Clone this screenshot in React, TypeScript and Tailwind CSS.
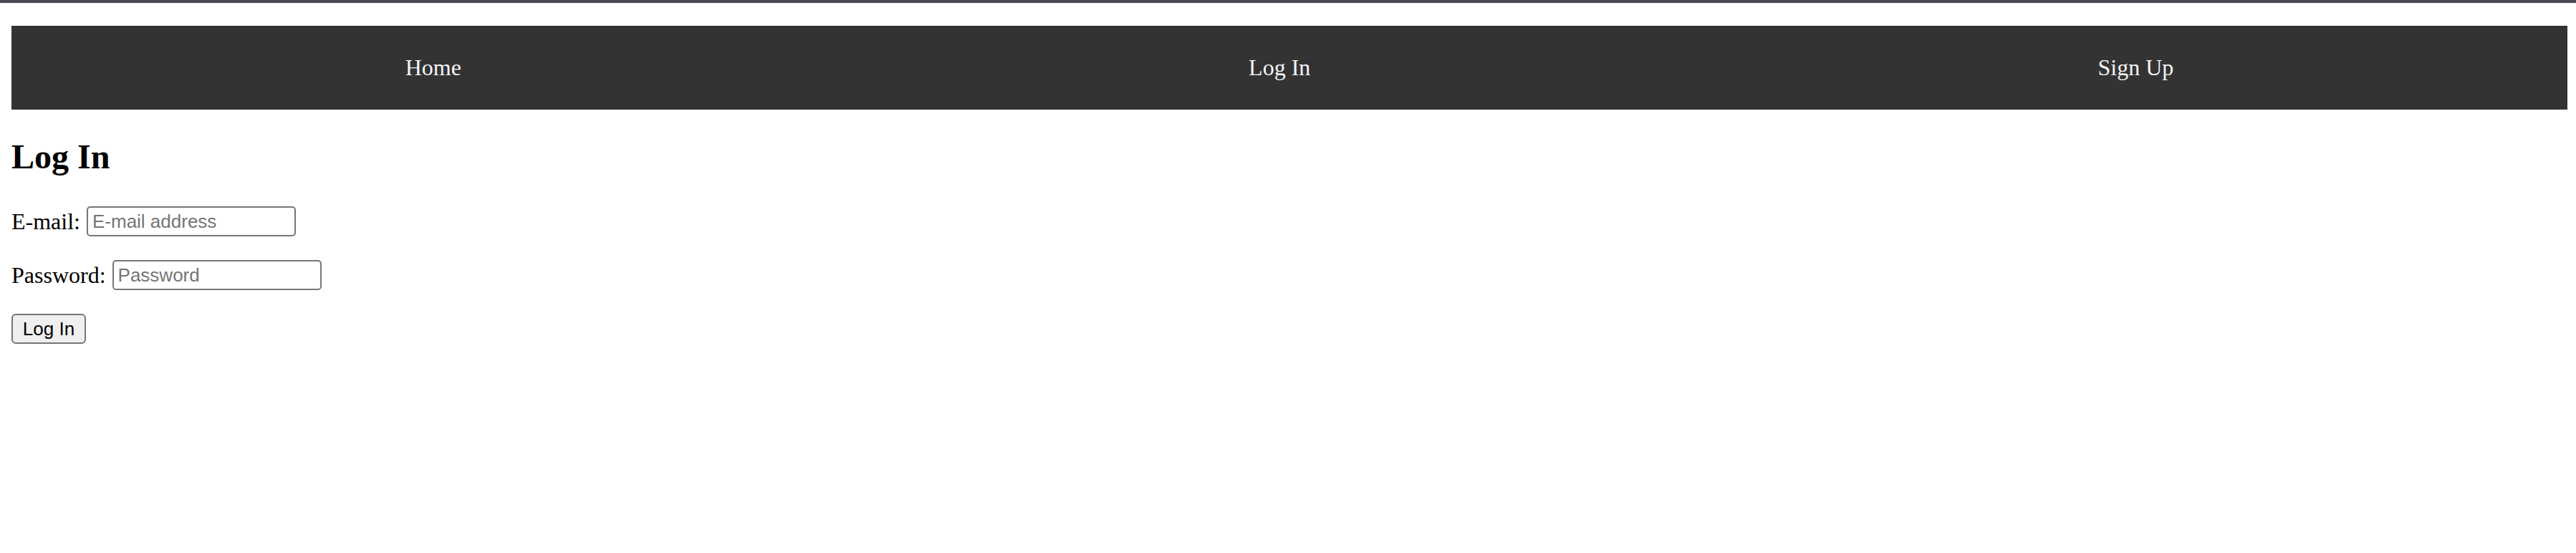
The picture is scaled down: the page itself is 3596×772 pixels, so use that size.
import { useState } from "react";

const NAV_LINKS = ["Home", "Log In", "Sign Up"];

export default function App() {
  const [email, setEmail] = useState("");
  const [password, setPassword] = useState("");

  return (
    <div className="min-h-screen bg-white font-['Liberation_Serif','Times_New_Roman',serif] text-black">
      {/* browser chrome edge */}
      <div className="h-[4px] bg-[#484852]" />
      <div className="h-px bg-[#e4e6ea]" />

      <div className="ml-[16px] mr-[12px]">
        <nav className="mt-[31px] flex h-[117px] items-center justify-around bg-[#333333] text-[32px] text-[#f4f5f8]">
          {NAV_LINKS.map((label) => (
            <a key={label} href="#" className="leading-[37px]">
              {label}
            </a>
          ))}
        </nav>

        <h2 className="mt-[38px] text-[48px] font-bold leading-[56px]">Log In</h2>

        <form className="flex flex-col" onSubmit={(e) => e.preventDefault()}>
          <div className="mt-[41px] flex h-[42px] items-center text-[32px]">
            <label htmlFor="email">E-mail:</label>
            <input
              id="email"
              type="email"
              value={email}
              onChange={(e) => setEmail(e.target.value)}
              placeholder="E-mail address"
              className="ml-[9px] h-[42px] w-[292px] rounded-[5px] border-2 border-[#767676] px-[6px] font-['Liberation_Sans',Arial,sans-serif] text-[26px] outline-none placeholder:text-[#757575]"
            />
          </div>

          <div className="mt-[33px] flex h-[42px] items-center text-[32px]">
            <label htmlFor="password">Password:</label>
            <input
              id="password"
              type="password"
              value={password}
              onChange={(e) => setPassword(e.target.value)}
              placeholder="Password"
              className="ml-[9px] h-[42px] w-[292px] rounded-[5px] border-2 border-[#767676] px-[6px] font-['Liberation_Sans',Arial,sans-serif] text-[26px] outline-none placeholder:text-[#757575]"
            />
          </div>

          <div className="mt-[33px] flex h-[42px] items-center">
            <button
              type="submit"
              className="flex h-[42px] w-[104px] items-center justify-center rounded-[6px] border-2 border-[#767676] bg-[#efefef] font-['Liberation_Sans',Arial,sans-serif] text-[26px] text-black"
            >
              Log In
            </button>
          </div>
        </form>
      </div>
    </div>
  );
}
